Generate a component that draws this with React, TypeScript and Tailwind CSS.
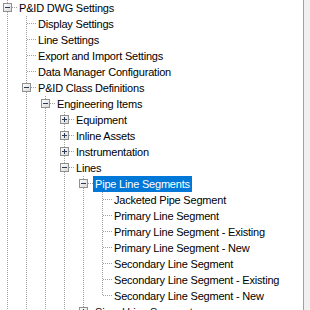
type Node = {
  label: string;
  box?: "plus" | "minus";
  selected?: boolean;
  children?: Node[];
};

type Row = {
  node: Node;
  level: number;
  last: boolean;
  guides: boolean[];
};

const tree: Node[] = [
  {
    label: "P&ID DWG Settings",
    box: "minus",
    children: [
      { label: "Display Settings" },
      { label: "Line Settings" },
      { label: "Export and Import Settings" },
      { label: "Data Manager Configuration" },
      {
        label: "P&ID Class Definitions",
        box: "minus",
        children: [
          {
            label: "Engineering Items",
            box: "minus",
            children: [
              { label: "Equipment", box: "plus" },
              { label: "Inline Assets", box: "plus" },
              { label: "Instrumentation", box: "plus" },
              {
                label: "Lines",
                box: "minus",
                children: [
                  {
                    label: "Pipe Line Segments",
                    box: "minus",
                    selected: true,
                    children: [
                      { label: "Jacketed Pipe Segment" },
                      { label: "Primary Line Segment" },
                      { label: "Primary Line Segment - Existing" },
                      { label: "Primary Line Segment - New" },
                      { label: "Secondary Line Segment" },
                      { label: "Secondary Line Segment - Existing" },
                      { label: "Secondary Line Segment - New" },
                    ],
                  },
                  { label: "Signal Line Segments", box: "plus" },
                ],
              },
              { label: "Symbols", box: "plus" },
            ],
          },
          { label: "Annotation", box: "plus" },
        ],
      },
      { label: "Tag Formats", box: "plus" },
    ],
  },
  { label: "Plant Settings", box: "plus" },
];

function flatten(nodes: Node[], level: number, guides: boolean[], out: Row[]) {
  nodes.forEach((node, i) => {
    const last = i === nodes.length - 1;
    out.push({ node, level, last, guides });
    if (node.children && node.box === "minus") {
      flatten(node.children, level + 1, [...guides, !last], out);
    }
  });
  return out;
}

const dot = "#a0a0a0";

function Guide({ on }: { on: boolean }) {
  return (
    <svg width="19" height="16" className="shrink-0" shapeRendering="crispEdges">
      {on && <line x1="7.5" y1="0" x2="7.5" y2="16" stroke={dot} strokeDasharray="1 1" />}
    </svg>
  );
}

function Connector({ box, last }: { box?: "plus" | "minus"; last: boolean }) {
  return (
    <svg width="19" height="16" className="shrink-0" shapeRendering="crispEdges">
      <line x1="7.5" y1="0" x2="7.5" y2={last ? 8 : 16} stroke={dot} strokeDasharray="1 1" />
      <line x1="8" y1="7.5" x2="18" y2="7.5" stroke={dot} strokeDasharray="1 1" />
      {box && (
        <>
          <defs>
            <linearGradient id="bx" x1="0" y1="0" x2="1" y2="1">
              <stop offset="0" stopColor="#ffffff" />
              <stop offset="1" stopColor="#d8d8d8" />
            </linearGradient>
          </defs>
          <rect x="3.5" y="3.5" width="8" height="8" fill="url(#bx)" stroke="#919191" />
          <line x1="5" y1="7.5" x2="10" y2="7.5" stroke="#2a3a55" />
          {box === "plus" && <line x1="7.5" y1="5" x2="7.5" y2="10" stroke="#2a3a55" />}
        </>
      )}
    </svg>
  );
}

export default function App() {
  const rows = flatten(tree, 0, [], []);
  return (
    <div className="flex h-[310px] w-[310px] overflow-hidden bg-white">
      <div className="flex-1 overflow-hidden font-['Liberation_Sans',sans-serif] text-[11px] tracking-[-0.2px] text-black">
        {rows.map((r, i) => (
          <div key={i} className="flex h-4 items-stretch">
            {r.guides.map((g, j) => (
              <Guide key={j} on={g} />
            ))}
            <Connector box={r.node.box} last={r.last} />
            <span
              className={
                "-ml-[2px] whitespace-nowrap px-[2px] leading-4 " +
                (r.node.selected ? "bg-[#0078d7] text-white" : "")
              }
            >
              {r.node.label}
            </span>
          </div>
        ))}
      </div>
      <div className="w-px bg-[#a0a0a0]" />
      <div className="w-[6px] bg-[#f0f0f0]" />
    </div>
  );
}
